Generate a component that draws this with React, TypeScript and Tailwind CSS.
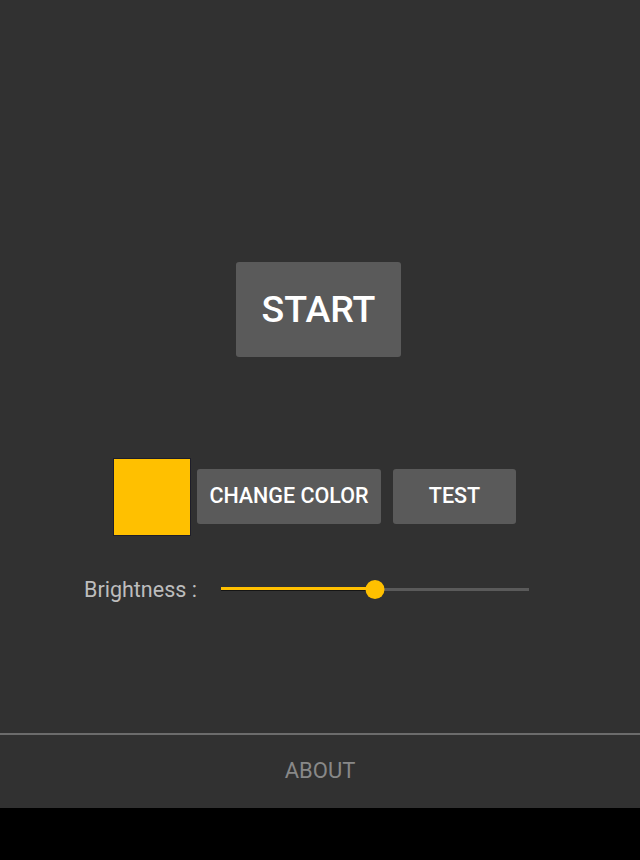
import { useState } from 'react';

const FONT = { fontFamily: 'Roboto, "Liberation Sans", sans-serif' };

export default function App() {
  const [brightness] = useState(50);

  return (
    <div className="flex h-[860px] w-[640px] flex-col bg-black" style={FONT}>
      <div className="flex h-[733px] flex-col items-center bg-[#313131]">
        <div className="h-[262px]" />
        <button className="mr-[3px] h-[95px] w-[165px] rounded-[3px] bg-[#5a5a5a] text-[37.5px] font-medium text-white">
          START
        </button>
        <div className="mr-[11px] mt-[101px] flex items-center gap-[6px]">
          <div className="h-[78px] w-[78px] border border-[#1e1e2a] bg-[#ffc000]" />
          <button className="mb-[2px] h-[55px] w-[184px] rounded-[3px] bg-[#5a5a5a] text-[21.5px] font-medium text-white">
            CHANGE COLOR
          </button>
          <button className="mb-[2px] ml-[6px] h-[55px] w-[123px] rounded-[3px] bg-[#5a5a5a] text-[21.5px] font-medium text-white">
            TEST
          </button>
        </div>
        <div className="mt-[38px] flex w-full items-center pl-[84px]">
          <span className="w-[137px] text-[21.5px] text-[#bdbdbd]">Brightness :</span>
          <div className="relative -mt-[3px] h-[20px] w-[308px]">
            <div className="absolute left-0 right-0 top-[9px] h-[3px] bg-[#5a5a5a]" />
            <div
              className="absolute left-0 top-[8px] h-[4px] border-b border-[#151515] bg-[#ffc000]"
              style={{ width: `${brightness}%` }}
            />
            <div
              className="absolute top-[1px] h-[19px] w-[19px] -translate-x-1/2 rounded-full bg-[#ffc000]"
              style={{ left: `${brightness}%` }}
            />
          </div>
        </div>
      </div>
      <div className="h-[2px] bg-[#6c6c6c]" />
      <div className="flex h-[73px] items-center justify-center bg-[#313131] pb-[2px]">
        <span className="text-[22px] text-[#888888]">ABOUT</span>
      </div>
    </div>
  );
}
